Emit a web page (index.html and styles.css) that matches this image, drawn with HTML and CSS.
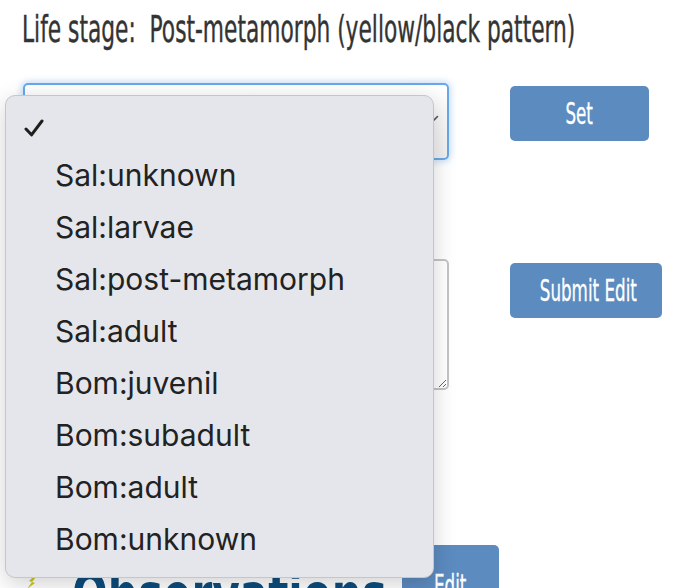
FILE: index.html
```html
<!DOCTYPE html>
<html>
<head>
<meta charset="utf-8">
<link rel="stylesheet" href="styles.css">
</head>
<body>
<div class="page">
  <p class="life"><span class="cond">Life stage:&nbsp; Post-metamorph (yellow/black pattern)</span></p>
  <div class="row row-select">
    <div class="select">
      <svg class="chev" width="14" height="9" viewBox="0 0 14 9"><path d="M1.5 1.5 L7 7 L12.5 1.5" fill="none" stroke="#555" stroke-width="1.6" stroke-linecap="round"/></svg>
    </div>
    <button class="btn btn-set"><span class="btn-label">Set</span></button>
  </div>
  <div class="row row-text">
    <textarea class="notes"></textarea>
    <button class="btn btn-submit"><span class="btn-label">Submit Edit</span></button>
  </div>
  <div class="row row-obs">
    <svg class="icon" width="12" height="16" viewBox="0 0 12 16"><path d="M9 1 L4 6 L7 7 L2 14 L10 8 L7 7 L11 2 Z" fill="#c9c72a"/></svg>
    <h2 class="obs"><span class="cond">Observations</span></h2>
    <button class="btn btn-edit"><span class="btn-label">Edit</span></button>
  </div>
  <div class="menu">
    <div class="item item-check"><svg width="20" height="18" viewBox="0 0 20 18"><path d="M2 10 L7.5 15.8 L18 2" fill="none" stroke="#1e1e1e" stroke-width="3" stroke-linecap="round" stroke-linejoin="round"/></svg></div>
    <div class="item">Sal:unknown</div>
    <div class="item">Sal:larvae</div>
    <div class="item">Sal:post-metamorph</div>
    <div class="item">Sal:adult</div>
    <div class="item">Bom:juvenil</div>
    <div class="item">Bom:subadult</div>
    <div class="item">Bom:adult</div>
    <div class="item">Bom:unknown</div>
  </div>
</div>
</body>
</html>
```

FILE: styles.css
```css
html, body {
  margin: 0;
  padding: 0;
  background: #fff;
}
.page {
  position: relative;
  width: 684px;
  height: 588px;
  overflow: hidden;
  padding-left: 23px;
  box-sizing: border-box;
}
.cond {
  display: inline-block;
  transform-origin: 0 50%;
}
.life {
  margin: 7px 0 0 -1px;
  font-family: "DejaVu Sans Condensed", "DejaVu Sans", sans-serif;
  font-size: 38px;
  line-height: 44px;
  color: #333;
  white-space: nowrap;
  -webkit-text-stroke: 0.4px #333;
}
.life .cond {
  transform: scaleX(0.636);
}
.row {
  display: flex;
  align-items: flex-start;
}
.row-select {
  margin-top: 32px;
}
.select {
  position: relative;
  width: 426px;
  height: 77px;
  box-sizing: border-box;
  border: 2px solid #68a8e8;
  border-radius: 5px;
  background: linear-gradient(#ffffff, #efefef);
  box-shadow: 0 0 6px 2px rgba(110, 165, 230, 0.35);
}
.chev {
  position: absolute;
  right: 8px;
  top: 30px;
}
.btn {
  font-family: "DejaVu Sans Condensed", "DejaVu Sans", sans-serif;
  font-size: 30px;
  color: #fff;
  background: #5c8bc0;
  border: none;
  border-radius: 5px;
  padding: 0;
  height: 55px;
  line-height: 55px;
  white-space: nowrap;
  overflow: hidden;
  flex: none;
  -webkit-text-stroke: 0.3px #fff;
}
.btn-label {
  display: inline-block;
  transform: scaleX(0.62);
}
.btn-set {
  margin: 3px 0 0 61px;
  width: 139px;
}
.row-text {
  margin-top: 99px;
}
.notes {
  width: 426px;
  height: 131px;
  box-sizing: border-box;
  border: 2px solid #c4c4c4;
  border-radius: 5px;
  margin: 0;
  background: #fff;
  flex: none;
}
.btn-submit {
  margin: 4px 0 0 61px;
  width: 152px;
}
.row-obs {
  margin-top: 155px;
}
.icon {
  margin: 30px 0 0 2px;
  flex: none;
}
.obs {
  margin: 20px 0 0 35px;
  width: 313px;
  flex: none;
  font-family: "DejaVu Sans Condensed", "DejaVu Sans", sans-serif;
  font-weight: 700;
  font-size: 60px;
  line-height: 60px;
  color: #0d4d7d;
  white-space: nowrap;
}
.obs .cond {
  transform: scaleX(0.78);
}
.btn-edit {
  margin-left: 17px;
  width: 97px;
  height: 80px;
  line-height: 75px;
}
.menu {
  position: absolute;
  left: 5px;
  top: 95px;
  width: 429px;
  box-sizing: border-box;
  padding: 1px 0 12px;
  background: #e5e6eb;
  border: 1px solid #c6c6ca;
  border-radius: 10px;
  box-shadow: 0 6px 22px rgba(0, 0, 0, 0.18);
}
.item {
  height: 52px;
  line-height: 52px;
  padding-left: 49px;
  font-family: "Inter", "Noto Sans", sans-serif;
  font-size: 30px;
  color: #222;
  white-space: nowrap;
}
.item-check {
  padding-left: 18px;
  display: flex;
  align-items: flex-end;
  height: 40px;
  padding-bottom: 12px;
}
.item-check svg {
  display: block;
}
```
